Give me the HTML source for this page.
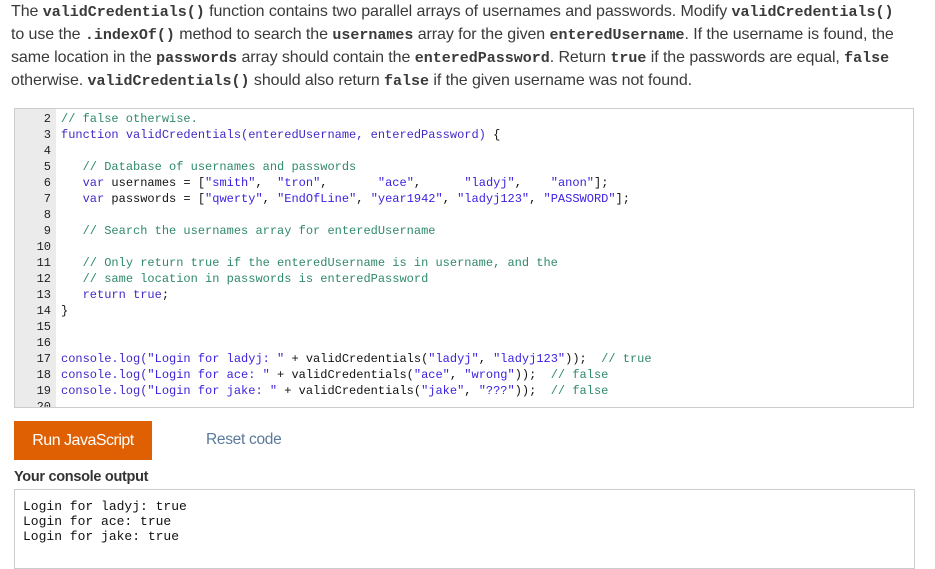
<!DOCTYPE html>
<html><head><meta charset="utf-8"><style>
body{margin:0;width:935px;height:563px;overflow:hidden;background:#fff;font-family:"Liberation Sans",sans-serif;color:#333}
.p{position:absolute;left:11px;top:1px;font-size:16px;line-height:22px;white-space:nowrap;letter-spacing:-0.08px;color:#3a3a3a}
.p code{font-family:"Liberation Mono",monospace;font-weight:bold;font-size:15px;letter-spacing:0}
.ed{position:absolute;left:14px;top:108px;width:898px;height:298px;border:1px solid #ccc;overflow:hidden;background:#fff}
.gut{position:absolute;left:0;top:0;width:41px;height:100%;background:#ebebeb}
.ln{position:absolute;left:0;width:36px;text-align:right;font-family:"Liberation Mono",monospace;font-size:12px;color:#222}
.cd{position:absolute;left:46px;white-space:pre;font-family:"Liberation Mono",monospace;font-size:12px;color:#111}
.c{color:#2f8a6c}.k{color:#4428c8}.s{color:#3a22e0}
.btn{position:absolute;left:14px;top:421px;width:138px;height:39px;background:#df6002;color:#fff;font-size:16px;line-height:39px;text-align:center;letter-spacing:-0.5px}
.rst{position:absolute;left:206px;top:431px;font-size:15.5px;color:#5a7a9a;letter-spacing:-0.3px}
.h{position:absolute;left:14px;top:469px;font-size:14.5px;font-weight:bold;color:#333;letter-spacing:-0.3px}
.out{position:absolute;left:14px;top:489px;width:901px;height:80px;border:1px solid #ccc;font-family:"Liberation Mono",monospace;font-size:13px;line-height:15px;color:#111;padding:9px 0 0 8px;box-sizing:border-box;white-space:pre}
</style></head><body>
<div class="p">The <code>validCredentials()</code> function contains two parallel arrays of usernames and passwords. Modify <code>validCredentials()</code><br>to use the <code>.indexOf()</code> method to search the <code>usernames</code> array for the given <code>enteredUsername</code>. If the username is found, the<br>same location in the <code>passwords</code> array should contain the <code>enteredPassword</code>. Return <code>true</code> if the passwords are equal, <code>false</code><br>otherwise. <code>validCredentials()</code> should also return <code>false</code> if the given username was not found.</div>
<div class="ed"><div class="gut"></div>
<div class="ln" style="top:3px">2</div><div class="cd" style="top:3px"><span class="c">// false otherwise.</span></div>
<div class="ln" style="top:19px">3</div><div class="cd" style="top:19px"><span class="k">function</span> <span class="k">validCredentials(enteredUsername, enteredPassword)</span> {</div>
<div class="ln" style="top:35px">4</div>
<div class="ln" style="top:51px">5</div><div class="cd" style="top:51px">   <span class="c">// Database of usernames and passwords</span></div>
<div class="ln" style="top:67px">6</div><div class="cd" style="top:67px">   <span class="k">var</span> usernames = [<span class="s">"smith"</span>,  <span class="s">"tron"</span>,       <span class="s">"ace"</span>,      <span class="s">"ladyj"</span>,    <span class="s">"anon"</span>];</div>
<div class="ln" style="top:83px">7</div><div class="cd" style="top:83px">   <span class="k">var</span> passwords = [<span class="s">"qwerty"</span>, <span class="s">"EndOfLine"</span>, <span class="s">"year1942"</span>, <span class="s">"ladyj123"</span>, <span class="s">"PASSWORD"</span>];</div>
<div class="ln" style="top:99px">8</div>
<div class="ln" style="top:115px">9</div><div class="cd" style="top:115px">   <span class="c">// Search the usernames array for enteredUsername</span></div>
<div class="ln" style="top:131px">10</div>
<div class="ln" style="top:147px">11</div><div class="cd" style="top:147px">   <span class="c">// Only return true if the enteredUsername is in username, and the</span></div>
<div class="ln" style="top:163px">12</div><div class="cd" style="top:163px">   <span class="c">// same location in passwords is enteredPassword</span></div>
<div class="ln" style="top:179px">13</div><div class="cd" style="top:179px">   <span class="k">return</span> <span class="k">true</span>;</div>
<div class="ln" style="top:195px">14</div><div class="cd" style="top:195px">}</div>
<div class="ln" style="top:211px">15</div>
<div class="ln" style="top:227px">16</div>
<div class="ln" style="top:243px">17</div><div class="cd" style="top:243px"><span class="k">console.log(</span><span class="s">"Login for ladyj: "</span> + validCredentials(<span class="s">"ladyj"</span>, <span class="s">"ladyj123"</span>));  <span class="c">// true</span></div>
<div class="ln" style="top:259px">18</div><div class="cd" style="top:259px"><span class="k">console.log(</span><span class="s">"Login for ace: "</span> + validCredentials(<span class="s">"ace"</span>, <span class="s">"wrong"</span>));  <span class="c">// false</span></div>
<div class="ln" style="top:275px">19</div><div class="cd" style="top:275px"><span class="k">console.log(</span><span class="s">"Login for jake: "</span> + validCredentials(<span class="s">"jake"</span>, <span class="s">"???"</span>));  <span class="c">// false</span></div>
<div class="ln" style="top:291px">20</div>
</div>
<div class="btn">Run JavaScript</div>
<div class="rst">Reset code</div>
<div class="h">Your console output</div>
<div class="out">Login for ladyj: true
Login for ace: true
Login for jake: true</div>
</body></html>
